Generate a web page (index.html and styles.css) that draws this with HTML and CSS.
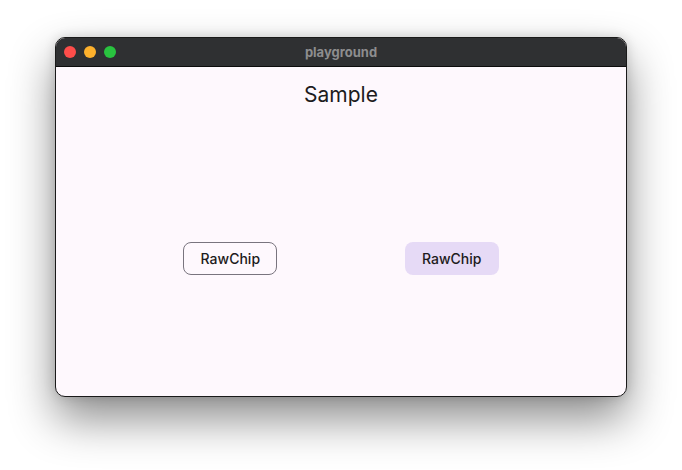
FILE: index.html
```html
<!DOCTYPE html>
<html>
<head>
<meta charset="utf-8">
<link rel="stylesheet" href="styles.css">
</head>
<body>
<div class="window">
  <div class="titlebar">
    <div class="lights">
      <span class="light red"></span>
      <span class="light yellow"></span>
      <span class="light green"></span>
    </div>
    <div class="title">playground</div>
  </div>
  <div class="content">
    <div class="appbar">Sample</div>
    <div class="body">
      <div class="chip outlined">RawChip</div>
      <div class="chip filled">RawChip</div>
    </div>
  </div>
</div>
</body>
</html>
```
FILE: styles.css
```css
html, body {
  margin: 0;
  padding: 0;
  background: #ffffff;
}
body {
  width: 682px;
  height: 470px;
  padding-top: 37px;
  box-sizing: border-box;
  overflow: hidden;
}
.window {
  margin-left: 55px;
  width: 572px;
  height: 360px;
  box-sizing: border-box;
  border: 1px solid #1a1a1a;
  border-radius: 10px;
  overflow: hidden;
  display: flex;
  flex-direction: column;
  box-shadow: 0 22px 45px rgba(0,0,0,0.45), 0 0 12px rgba(0,0,0,0.15);
  background: #fef8fd;
}
.titlebar {
  position: relative;
  height: 28px;
  flex: none;
  background: #2f3032;
  border-bottom: 1px solid #0c0c0c;
  display: flex;
  align-items: center;
  justify-content: center;
}
.lights {
  position: absolute;
  left: 8px;
  top: 8px;
  display: flex;
  gap: 8px;
}
.light {
  width: 12px;
  height: 12px;
  border-radius: 50%;
  display: block;
}
.red { background: #fe4d4a; }
.yellow { background: #feb12c; }
.green { background: #29c33f; }
.title {
  font-family: "Inter", "Liberation Sans", sans-serif;
  font-weight: 700;
  font-size: 13px;
  color: #8d8d8e;
}
.content {
  flex: 1;
  display: flex;
  flex-direction: column;
}
.appbar {
  height: 54px;
  flex: none;
  display: flex;
  align-items: center;
  justify-content: center;
  font-family: "Inter", "Liberation Sans", sans-serif;
  font-size: 21px;
  color: #1d1b20;
}
.body {
  flex: 1;
  padding-bottom: 1px;
  display: flex;
  align-items: center;
  justify-content: space-evenly;
}
.chip {
  width: 94px;
  height: 33px;
  box-sizing: border-box;
  border-radius: 8px;
  display: flex;
  align-items: center;
  justify-content: center;
  font-family: "Inter", "Liberation Sans", sans-serif;
  font-size: 14px;
  font-weight: 500;
  color: #1d1b20;
}
.outlined {
  border: 1px solid #79747e;
}
.filled {
  background: #e6daf6;
}
```
